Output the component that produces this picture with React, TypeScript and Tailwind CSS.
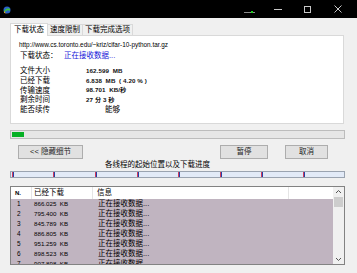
import clsx from 'clsx';

const cjk = "font-['Liberation_Sans','Noto_Sans_CJK_SC',sans-serif]";

const rows = [
  ['1', '866.025', 'KB'],
  ['2', '795.400', 'KB'],
  ['3', '845.789', 'KB'],
  ['4', '886.805', 'KB'],
  ['5', '951.259', 'KB'],
  ['6', '898.523', 'KB'],
  ['7', '907.898', 'KB'],
];

const info: [string, string, string?][] = [
  ['文件大小', '162.599  MB'],
  ['已经下载', '6.838  MB  ( 4.20 % )'],
  ['传输速度', '98.701  KB/秒'],
  ['剩余时间', '27 分 3 秒'],
  ['能否续传', '', '能够'],
];

// thread start markers along the bar (px from bar left)
const markers = [1, 42, 84, 126, 167, 209, 250, 292];

function AppIcon() {
  return (
    <svg width="8" height="8" viewBox="0 0 8 8">
      <circle cx="4" cy="4" r="3.5" fill="#2a62c8" />
      <path d="M1 5 Q4 1 7 3 L7 5 Q4 3 1 7Z" fill="#3fbf3f" />
      <path d="M1 5 Q2 7 4 7.5 L1 7Z" fill="#f0a020" />
    </svg>
  );
}

function Btn({ label, w }: { label: string; w: string }) {
  return (
    <div
      className={clsx(
        'h-[14px] flex items-center justify-center bg-[#e1e1e1] border border-[#adadad] text-[7.5px] text-[#222]',
        w,
      )}
    >
      {label}
    </div>
  );
}

export default function App() {
  return (
    <div className={clsx('w-[357px] h-[273px] overflow-hidden bg-[#f0f0f0] leading-none', cjk)}>
      {/* title bar */}
      <div className="h-[18px] bg-black flex items-center relative">
        <div className="ml-[3px] mt-[1px]">
          <AppIcon />
        </div>
        <div className="ml-auto flex items-center">
          <div className="relative w-[11px] h-[1px] bg-[#8a8a8a] mt-[6px] mr-[19px]">
            <div className="absolute left-[7px] -top-[1px] w-[2px] h-[2px] bg-[#1fd11f]" />
          </div>
          <div className="w-[8px] h-[1px] bg-[#c8c8c8] mr-[22px]" />
          <div className="w-[7px] h-[7px] border border-[#c8c8c8] mr-[23px]" />
          <svg width="8" height="8" viewBox="0 0 8 8" className="mr-[15px]">
            <path d="M0.5 0.5 L7.5 7.5 M7.5 0.5 L0.5 7.5" stroke="#c8c8c8" strokeWidth="1" />
          </svg>
        </div>
      </div>

      <div className="pl-[10px] pr-[12px]">
        {/* tabs */}
        <div className="flex items-end h-[17px] text-[7.5px] text-black">
          <div className="w-[38px] h-[13px] bg-white border border-b-0 border-[#d9d9d9] flex items-center justify-center relative top-[1px]">
            下载状态
          </div>
          <div className="w-[35px] h-[11px] bg-[#f0f0f0] border border-b-0 border-l-0 border-[#d9d9d9] flex items-center justify-center">
            速度限制
          </div>
          <div className="w-[50px] h-[11px] bg-[#f0f0f0] border border-b-0 border-l-0 border-[#d9d9d9] flex items-center justify-center">
            下载完成选项
          </div>
        </div>

        {/* status panel */}
        <div className="w-[334px] h-[89px] bg-white border border-[#d9d9d9] pl-[8px] pt-[6px]">
          <div className="text-[6.4px] text-black h-[6px] flex items-center">
            http://www.cs.toronto.edu/~kriz/cifar-10-python.tar.gz
          </div>
          <div className="flex items-center mt-[4px] h-[8px] text-[7.5px] pl-[1px]">
            <span className="w-[44px]">下载状态：</span>
            <span className="text-[#1515d8]">正在接收数据...</span>
          </div>
          <div className="mt-[7px] flex flex-col gap-[1.7px] pl-[1px]">
            {info.map(([label, value, extra]) => (
              <div key={label} className="flex items-center h-[8px]">
                <span className="w-[66px] text-[7.5px]">{label}</span>
                {value && (
                  <span className="text-[6.2px] font-bold tracking-[0.1px] whitespace-pre text-[#111]">
                    {value}
                  </span>
                )}
                {extra && <span className="ml-[19px] text-[7.5px]">{extra}</span>}
              </div>
            ))}
          </div>
        </div>

        {/* overall progress */}
        <div className="mt-[6px] w-[335px] h-[9px] bg-[#e6e6e6] border border-[#bcbcbc] p-px">
          <div className="w-[12px] h-full bg-[#06b025]" />
        </div>

        {/* buttons */}
        <div className="mt-[6px] flex h-[14px]">
          <div className="ml-[8px]">
            <Btn label="<< 隐藏细节" w="w-[65px]" />
          </div>
          <div className="ml-[137px]">
            <Btn label="暂停" w="w-[48px]" />
          </div>
          <div className="ml-[17px]">
            <Btn label="取消" w="w-[43px]" />
          </div>
        </div>

        <div className="h-[12px] flex items-center text-[7.5px] pl-[95px]">
          各线程的起始位置以及下载进度
        </div>

        {/* thread bar */}
        <div className="w-[335px] h-[7px] bg-[#e2eaf7] border border-[#9aa3b0] relative">
          {markers.map((m) => (
            <div key={m} className="absolute top-0 bottom-0 flex" style={{ left: m }}>
              <div className="w-px h-full bg-[#d23a5a]" />
              <div className="w-px h-full bg-[#2440a8]" />
            </div>
          ))}
        </div>

        {/* thread table */}
        <div className="mt-[8px] w-[335px] h-[79px] border border-[#828282] bg-white flex">
          <div className="flex-1 flex flex-col min-w-0">
            <div className="h-[12px] flex items-center text-[7.5px] shrink-0">
              <div className="w-[21px] h-full flex items-center pl-[4px] border-r border-[#e5e5e5] text-[6px] font-bold">
                N.
              </div>
              <div className="w-[61px] h-full flex items-center pl-[2px] border-r border-[#e5e5e5]">
                已经下载
              </div>
              <div className="w-[196px] h-full flex items-center pl-[4px] border-r border-[#e5e5e5]">
                信息
              </div>
            </div>
            <div className="flex-1 bg-[#c0b4c0] overflow-hidden">
              {rows.map(([n, v, u]) => (
                <div key={n} className="h-[10px] flex items-center">
                  <div className="w-[21px] pl-[6px] text-[6.4px]">{n}</div>
                  <div className="w-[61px] pl-[2px] text-[6.2px] whitespace-pre">
                    {v}  {u}
                  </div>
                  <div className="pl-[5px] text-[7.5px]">正在接收数据...</div>
                </div>
              ))}
            </div>
          </div>
          {/* scrollbar */}
          <div className="w-[11px] bg-[#f0f0f0] flex flex-col items-center">
            <svg width="7" height="10" viewBox="0 0 7 10">
              <path d="M1 6 L3.5 3.5 L6 6" stroke="#555" fill="none" strokeWidth="1" />
            </svg>
            <div className="w-[9px] h-[10px] bg-[#cdcdcd]" />
            <div className="flex-1" />
            <svg width="7" height="10" viewBox="0 0 7 10">
              <path d="M1 4 L3.5 6.5 L6 4" stroke="#555" fill="none" strokeWidth="1" />
            </svg>
          </div>
        </div>
      </div>
    </div>
  );
}
